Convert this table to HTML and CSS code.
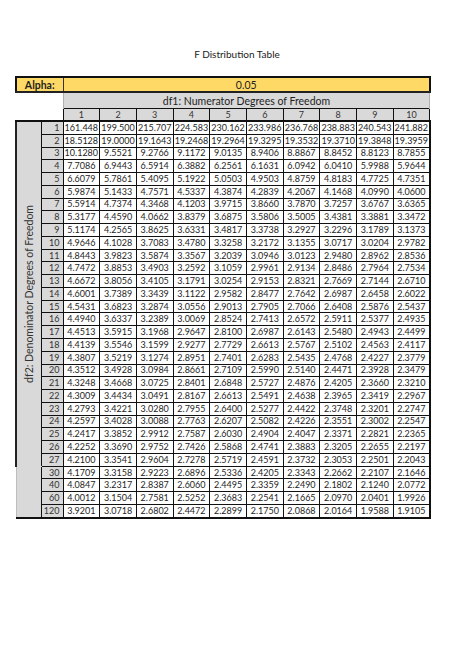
FILE: index.html
```html
<!DOCTYPE html>
<html>
<head>
<meta charset="utf-8">
<title>F Distribution Table</title>
<link rel="stylesheet" href="styles.css">
</head>
<body>
<div class="page">
  <div class="title">F Distribution Table</div>
  <table class="ftable">
    <colgroup>
      <col class="c-label"><col class="c-num">
      <col class="c-val"><col class="c-val"><col class="c-val"><col class="c-val"><col class="c-val">
      <col class="c-val"><col class="c-val"><col class="c-val"><col class="c-val"><col class="c-val">
    </colgroup>
    <tr class="r-alpha">
      <td colspan="2" class="alpha-label">Alpha:</td>
      <td colspan="10" class="alpha-value">0.05</td>
    </tr>
    <tr class="r-df1">
      <td colspan="2" class="blank"></td>
      <td colspan="10" class="df1">df1: Numerator Degrees of Freedom</td>
    </tr>
    <tr class="r-head">
      <td colspan="2" class="blank"></td>
      <td class="h">1</td><td class="h">2</td><td class="h">3</td><td class="h">4</td><td class="h">5</td>
      <td class="h">6</td><td class="h">7</td><td class="h">8</td><td class="h">9</td><td class="h last">10</td>
    </tr>
    <tr class="r-data first"><td rowspan="27" class="df2"><div class="vlabel">df2: Denominator Degrees of Freedom</div></td><td class="n">1</td><td>161.448</td><td>199.500</td><td>215.707</td><td>224.583</td><td>230.162</td><td>233.986</td><td>236.768</td><td>238.883</td><td>240.543</td><td class="last">241.882</td></tr>
    <tr class="r-data"><td class="n">2</td><td>18.5128</td><td>19.0000</td><td>19.1643</td><td>19.2468</td><td>19.2964</td><td>19.3295</td><td>19.3532</td><td>19.3710</td><td>19.3848</td><td class="last">19.3959</td></tr>
    <tr class="r-data"><td class="n">3</td><td>10.1280</td><td>9.5521</td><td>9.2766</td><td>9.1172</td><td>9.0135</td><td>8.9406</td><td>8.8867</td><td>8.8452</td><td>8.8123</td><td class="last">8.7855</td></tr>
    <tr class="r-data"><td class="n">4</td><td>7.7086</td><td>6.9443</td><td>6.5914</td><td>6.3882</td><td>6.2561</td><td>6.1631</td><td>6.0942</td><td>6.0410</td><td>5.9988</td><td class="last">5.9644</td></tr>
    <tr class="r-data"><td class="n">5</td><td>6.6079</td><td>5.7861</td><td>5.4095</td><td>5.1922</td><td>5.0503</td><td>4.9503</td><td>4.8759</td><td>4.8183</td><td>4.7725</td><td class="last">4.7351</td></tr>
    <tr class="r-data"><td class="n">6</td><td>5.9874</td><td>5.1433</td><td>4.7571</td><td>4.5337</td><td>4.3874</td><td>4.2839</td><td>4.2067</td><td>4.1468</td><td>4.0990</td><td class="last">4.0600</td></tr>
    <tr class="r-data"><td class="n">7</td><td>5.5914</td><td>4.7374</td><td>4.3468</td><td>4.1203</td><td>3.9715</td><td>3.8660</td><td>3.7870</td><td>3.7257</td><td>3.6767</td><td class="last">3.6365</td></tr>
    <tr class="r-data"><td class="n">8</td><td>5.3177</td><td>4.4590</td><td>4.0662</td><td>3.8379</td><td>3.6875</td><td>3.5806</td><td>3.5005</td><td>3.4381</td><td>3.3881</td><td class="last">3.3472</td></tr>
    <tr class="r-data"><td class="n">9</td><td>5.1174</td><td>4.2565</td><td>3.8625</td><td>3.6331</td><td>3.4817</td><td>3.3738</td><td>3.2927</td><td>3.2296</td><td>3.1789</td><td class="last">3.1373</td></tr>
    <tr class="r-data"><td class="n">10</td><td>4.9646</td><td>4.1028</td><td>3.7083</td><td>3.4780</td><td>3.3258</td><td>3.2172</td><td>3.1355</td><td>3.0717</td><td>3.0204</td><td class="last">2.9782</td></tr>
    <tr class="r-data"><td class="n">11</td><td>4.8443</td><td>3.9823</td><td>3.5874</td><td>3.3567</td><td>3.2039</td><td>3.0946</td><td>3.0123</td><td>2.9480</td><td>2.8962</td><td class="last">2.8536</td></tr>
    <tr class="r-data"><td class="n">12</td><td>4.7472</td><td>3.8853</td><td>3.4903</td><td>3.2592</td><td>3.1059</td><td>2.9961</td><td>2.9134</td><td>2.8486</td><td>2.7964</td><td class="last">2.7534</td></tr>
    <tr class="r-data"><td class="n">13</td><td>4.6672</td><td>3.8056</td><td>3.4105</td><td>3.1791</td><td>3.0254</td><td>2.9153</td><td>2.8321</td><td>2.7669</td><td>2.7144</td><td class="last">2.6710</td></tr>
    <tr class="r-data"><td class="n">14</td><td>4.6001</td><td>3.7389</td><td>3.3439</td><td>3.1122</td><td>2.9582</td><td>2.8477</td><td>2.7642</td><td>2.6987</td><td>2.6458</td><td class="last">2.6022</td></tr>
    <tr class="r-data"><td class="n">15</td><td>4.5431</td><td>3.6823</td><td>3.2874</td><td>3.0556</td><td>2.9013</td><td>2.7905</td><td>2.7066</td><td>2.6408</td><td>2.5876</td><td class="last">2.5437</td></tr>
    <tr class="r-data"><td class="n">16</td><td>4.4940</td><td>3.6337</td><td>3.2389</td><td>3.0069</td><td>2.8524</td><td>2.7413</td><td>2.6572</td><td>2.5911</td><td>2.5377</td><td class="last">2.4935</td></tr>
    <tr class="r-data"><td class="n">17</td><td>4.4513</td><td>3.5915</td><td>3.1968</td><td>2.9647</td><td>2.8100</td><td>2.6987</td><td>2.6143</td><td>2.5480</td><td>2.4943</td><td class="last">2.4499</td></tr>
    <tr class="r-data"><td class="n">18</td><td>4.4139</td><td>3.5546</td><td>3.1599</td><td>2.9277</td><td>2.7729</td><td>2.6613</td><td>2.5767</td><td>2.5102</td><td>2.4563</td><td class="last">2.4117</td></tr>
    <tr class="r-data"><td class="n">19</td><td>4.3807</td><td>3.5219</td><td>3.1274</td><td>2.8951</td><td>2.7401</td><td>2.6283</td><td>2.5435</td><td>2.4768</td><td>2.4227</td><td class="last">2.3779</td></tr>
    <tr class="r-data"><td class="n">20</td><td>4.3512</td><td>3.4928</td><td>3.0984</td><td>2.8661</td><td>2.7109</td><td>2.5990</td><td>2.5140</td><td>2.4471</td><td>2.3928</td><td class="last">2.3479</td></tr>
    <tr class="r-data"><td class="n">21</td><td>4.3248</td><td>3.4668</td><td>3.0725</td><td>2.8401</td><td>2.6848</td><td>2.5727</td><td>2.4876</td><td>2.4205</td><td>2.3660</td><td class="last">2.3210</td></tr>
    <tr class="r-data"><td class="n">22</td><td>4.3009</td><td>3.4434</td><td>3.0491</td><td>2.8167</td><td>2.6613</td><td>2.5491</td><td>2.4638</td><td>2.3965</td><td>2.3419</td><td class="last">2.2967</td></tr>
    <tr class="r-data"><td class="n">23</td><td>4.2793</td><td>3.4221</td><td>3.0280</td><td>2.7955</td><td>2.6400</td><td>2.5277</td><td>2.4422</td><td>2.3748</td><td>2.3201</td><td class="last">2.2747</td></tr>
    <tr class="r-data"><td class="n">24</td><td>4.2597</td><td>3.4028</td><td>3.0088</td><td>2.7763</td><td>2.6207</td><td>2.5082</td><td>2.4226</td><td>2.3551</td><td>2.3002</td><td class="last">2.2547</td></tr>
    <tr class="r-data"><td class="n">25</td><td>4.2417</td><td>3.3852</td><td>2.9912</td><td>2.7587</td><td>2.6030</td><td>2.4904</td><td>2.4047</td><td>2.3371</td><td>2.2821</td><td class="last">2.2365</td></tr>
    <tr class="r-data"><td class="n">26</td><td>4.2252</td><td>3.3690</td><td>2.9752</td><td>2.7426</td><td>2.5868</td><td>2.4741</td><td>2.3883</td><td>2.3205</td><td>2.2655</td><td class="last">2.2197</td></tr>
    <tr class="r-data"><td class="n">27</td><td>4.2100</td><td>3.3541</td><td>2.9604</td><td>2.7278</td><td>2.5719</td><td>2.4591</td><td>2.3732</td><td>2.3053</td><td>2.2501</td><td class="last">2.2043</td></tr>
    <tr class="r-data"><td rowspan="4" class="df2-rest"></td><td class="n">30</td><td>4.1709</td><td>3.3158</td><td>2.9223</td><td>2.6896</td><td>2.5336</td><td>2.4205</td><td>2.3343</td><td>2.2662</td><td>2.2107</td><td class="last">2.1646</td></tr>
    <tr class="r-data"><td class="n">40</td><td>4.0847</td><td>3.2317</td><td>2.8387</td><td>2.6060</td><td>2.4495</td><td>2.3359</td><td>2.2490</td><td>2.1802</td><td>2.1240</td><td class="last">2.0772</td></tr>
    <tr class="r-data"><td class="n">60</td><td>4.0012</td><td>3.1504</td><td>2.7581</td><td>2.5252</td><td>2.3683</td><td>2.2541</td><td>2.1665</td><td>2.0970</td><td>2.0401</td><td class="last">1.9926</td></tr>
    <tr class="r-data bottom"><td class="n">120</td><td>3.9201</td><td>3.0718</td><td>2.6802</td><td>2.4472</td><td>2.2899</td><td>2.1750</td><td>2.0868</td><td>2.0164</td><td>1.9588</td><td class="last">1.9105</td></tr>
  </table>
</div>
</body>
</html>
```
FILE: styles.css
```css
html, body {
  margin: 0;
  padding: 0;
  background: #ffffff;
}

body {
  font-family: Lato, "Open Sans", sans-serif;
  color: #1e1e1e;
}

.page {
  padding: 47px 0 0 15px;
  width: 414px;
}

.title {
  text-align: center;
  font-size: 10px;
  line-height: 14px;
  height: 14px;
  color: #222;
  width: 444px;
}

.ftable {
  margin-top: 15px;
  width: 414px;
  table-layout: fixed;
  border-collapse: collapse;
  font-size: 9px;
}

.c-label { width: 25px; }
.c-num { width: 22px; }
.c-val { width: 36.7px; }

.ftable td {
  padding: 0;
  line-height: 10px;
  text-align: center;
  white-space: nowrap;
  overflow: hidden;
}

.r-alpha td {
  height: 13px;
  background: #ffd966;
  border-top: 2px solid #111;
  border-bottom: 2px solid #222;
  font-size: 10.5px;
}

.alpha-label {
  border-left: 2px solid #111;
  border-right: 1px solid #333;
  font-weight: bold;
}

.alpha-value {
  border-right: 2px solid #111;
}

.r-df1 td {
  height: 15px;
}

.df1 {
  background: #d9d9d9;
  font-size: 10.5px;
  border-right: 1px solid #b0b0b0;
  border-left: 1px solid #b0b0b0;
}

.r-head td {
  height: 11px;
}

.h {
  background: #d9d9d9;
  border: 1px solid #111;
  color: #333;
}

.blank {
  background: #fff;
}

.r-data td {
  height: 11.77px;
  border: 1px solid #111;
  background: #fff;
}

.r-data.first td {
  border-top: 2px solid #111;
}

.r-data td.last {
  border-right: 2px solid #111;
}

.r-data.bottom td {
  border-bottom: 2px solid #111;
}

.ftable td.n {
  background: #d9d9d9;
  text-align: right;
  padding-right: 3px;
  color: #333;
}

.ftable td.df2 {
  background: #d9d9d9;
  border-left: 2px solid #222;
  border-top: 2px solid #111;
  border-bottom: 1px solid #d9d9d9;
  vertical-align: middle;
  overflow: visible;
}

.ftable td.df2-rest {
  background: #d9d9d9;
  border-left: 1px solid #bdbdbd;
  border-top: 1px solid #d9d9d9;
  border-bottom: 2px solid #111;
}

.vlabel {
  writing-mode: vertical-rl;
  transform: rotate(180deg);
  font-size: 10.5px;
  line-height: 12px;
  color: #333;
  margin: 0 auto;
  white-space: nowrap;
}
```
